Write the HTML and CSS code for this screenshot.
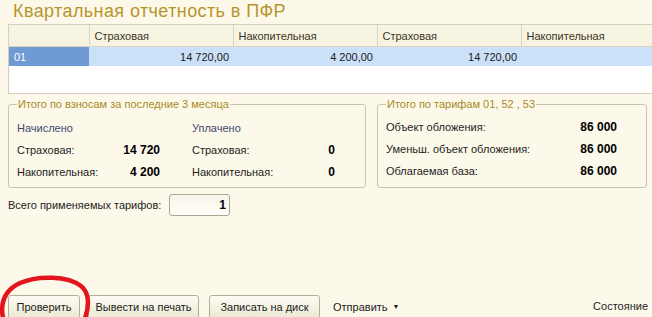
FILE: index.html
```html
<!DOCTYPE html>
<html>
<head>
  <title>Квартальная отчетность в ПФР</title>
  <link rel="stylesheet" href="styles.css">
</head>
<body>
  <div class="page">
    <h1 class="title">Квартальная отчетность в ПФР</h1>

    <!-- Tariff grid -->
    <div class="grid-wrap">
      <table class="grid">
        <colgroup>
          <col class="col-code">
          <col class="col-sum">
          <col class="col-sum">
          <col class="col-sum">
          <col class="col-sum">
        </colgroup>
        <tr class="grid-head">
          <th></th>
          <th>Страховая</th>
          <th>Накопительная</th>
          <th>Страховая</th>
          <th>Накопительная</th>
        </tr>
        <tr class="grid-row selected">
          <td class="code">01</td>
          <td class="num">14 720,00</td>
          <td class="num">4 200,00</td>
          <td class="num">14 720,00</td>
          <td class="num"></td>
        </tr>
      </table>
    </div>

    <!-- Totals -->
    <div class="totals">
      <fieldset class="group group-fees">
        <legend>Итого по взносам за последние 3 месяца</legend>
        <div class="group-body">
          <div class="pair">
            <div class="pair-head">Начислено</div>
            <div class="pair-label">Страховая:</div>
            <div class="pair-value">14 720</div>
            <div class="pair-label">Накопительная:</div>
            <div class="pair-value">4 200</div>
          </div>
          <div class="pair">
            <div class="pair-head">Уплачено</div>
            <div class="pair-label">Страховая:</div>
            <div class="pair-value">0</div>
            <div class="pair-label">Накопительная:</div>
            <div class="pair-value">0</div>
          </div>
        </div>
      </fieldset>

      <fieldset class="group group-tariffs">
        <legend>Итого по тарифам 01, 52 , 53</legend>
        <div class="pair pair-wide">
          <div class="pair-label">Объект обложения:</div>
          <div class="pair-value">86 000</div>
          <div class="pair-label">Уменьш. объект обложения:</div>
          <div class="pair-value">86 000</div>
          <div class="pair-label">Облагаемая база:</div>
          <div class="pair-value">86 000</div>
        </div>
      </fieldset>
    </div>

    <div class="tariff-count">
      <span class="tariff-label">Всего применяемых тарифов:</span>
      <span class="field">1</span>
    </div>

    <!-- Bottom command bar -->
    <div class="toolbar">
      <button class="btn btn-check">Проверить</button>
      <button class="btn btn-wide">Вывести на печать</button>
      <button class="btn btn-wide">Записать на диск</button>
      <span class="menu-link">Отправить <span class="caret">▼</span></span>
      <span class="status-link">Состояние</span>
    </div>

    <svg class="red-mark" width="96" height="44" viewBox="0 275 96 44">
      <path d="M 3 318 C 0 302, 5 290, 20 283 C 38 275, 68 276, 81 286 C 90 293, 89 307, 85 318" fill="none" stroke="#e3141b" stroke-width="4.5" stroke-linecap="round"/>
    </svg>
  </div>
</body>
</html>
```

FILE: styles.css
```css
/* Base */
body {
  margin: 0;
  background: #fcf9ea;
  font-family: "Liberation Sans", Arial, sans-serif;
  font-size: 11px;
  color: #1c1c1c;
}

.page {
  position: relative;
  height: 317px;
  display: flex;
  flex-direction: column;
  overflow: hidden;
}

.title {
  margin: 0 0 3px;
  padding: 1px 0 0 13px;
  font-size: 18px;
  line-height: 20px;
  font-weight: normal;
  letter-spacing: 0.4px;
  color: #b8952c;
}

/* Grid */
.grid-wrap {
  margin-left: 8px;
  width: 700px;
  height: 68px;
  background: #fff;
  border: 1px solid #d3cfbc;
  flex-shrink: 0;
}

.grid {
  border-collapse: collapse;
  table-layout: fixed;
  width: 656px;
}

.col-code { width: 80px; }
.col-sum { width: 144px; }

.grid-head th {
  height: 21px;
  padding: 0 5px;
  background: #f7f3e1;
  border-right: 1px solid #d8d4c1;
  border-bottom: 1px solid #d8d4c1;
  font-weight: normal;
  text-align: left;
  color: #3b3526;
}

.grid-row td {
  height: 19px;
  padding: 0 4px;
  background: #cbe0f9;
}

.grid-row .code {
  background: #6f9ad3;
  color: #fff;
  padding-left: 5px;
}

.grid-row .num {
  text-align: right;
}

/* Totals */
.totals {
  display: flex;
  gap: 11px;
  margin: 4px 0 0 8px;
  flex-shrink: 0;
}

.group {
  margin: 0;
  padding: 0 8px 4px;
  border: 1px solid #c9c5b1;
  border-radius: 3px;
  min-width: 0;
}

.group legend {
  padding: 0 1px;
  line-height: 13px;
  color: #a88a1f;
}

.group-fees { width: 340px; }
.group-tariffs { width: 252px; }

.group-body {
  display: flex;
  gap: 32px;
  padding-top: 6px;
}

.pair {
  display: grid;
  grid-template-columns: 93px 50px;
  grid-auto-rows: 22px;
  align-items: center;
}

.pair-wide {
  grid-template-columns: 160px 71px;
  padding-top: 5px;
}

.pair-head {
  grid-column: 1 / 3;
  color: #3c4770;
}

.pair-value {
  text-align: right;
  font-weight: bold;
  font-size: 12px;
  color: #000;
}

/* Count of tariffs */
.tariff-count {
  display: flex;
  align-items: center;
  margin: 6px 0 0 8px;
  height: 22px;
}

.tariff-label {
  width: 161px;
}

.field {
  width: 56px;
  height: 20px;
  line-height: 20px;
  padding-right: 3px;
  text-align: right;
  font-weight: bold;
  font-size: 12px;
  color: #000;
  background: linear-gradient(#f7f5ea, #fefdf8);
  border: 1px solid #aba792;
  border-radius: 3px;
}

/* Toolbar */
.toolbar {
  margin-top: auto;
  height: 22px;
  flex-shrink: 0;
  display: flex;
  align-items: flex-start;
  padding-left: 8px;
}

.btn {
  height: 24px;
  font-family: inherit;
  font-size: 11px;
  color: #1c1c1c;
  background: linear-gradient(#fdfcf4, #ece8d4);
  border: 1px solid #b3ae98;
  border-radius: 3px;
  padding: 0;
  margin-right: 9px;
}

.btn-check { width: 72px; margin-right: 8px; }
.btn-wide { width: 111px; margin-right: 10px; }

.menu-link {
  margin-left: 3px;
  line-height: 23px;
}

.caret {
  font-size: 7px;
  vertical-align: 2px;
  margin-left: 2px;
}

.status-link {
  margin-left: auto;
  padding-right: 4px;
  line-height: 23px;
}

/* Hand-drawn highlight over the first button */
.red-mark {
  position: absolute;
  left: 0;
  top: 275px;
}
```
